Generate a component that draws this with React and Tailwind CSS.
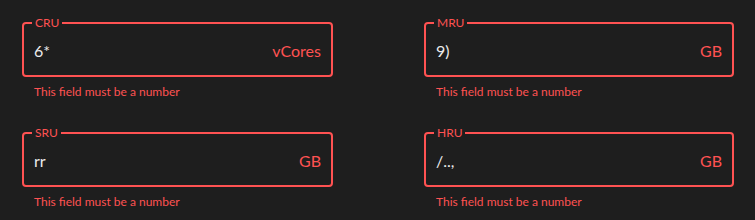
import React from "react";

const fields = [
  { label: "CRU", value: "6*", unit: "vCores" },
  { label: "MRU", value: "9)", unit: "GB" },
  { label: "SRU", value: "rr", unit: "GB" },
  { label: "HRU", value: "/..,", unit: "GB" },
];

function Field({ label, value, unit }) {
  return (
    <div className="flex flex-col">
      <div className="relative h-[55px] rounded-[4px] border-2 border-[#ff5252] flex items-center pl-[10px] pr-[10px] pt-[3px]">
        <span className="absolute -top-[9px] left-[8px] px-[3px] bg-[#1e1e1e] text-[12px] leading-[16px] text-[#ff5252]">
          {label}
        </span>
        <span className="flex-1 text-[16px] text-[#ececec]">{value}</span>
        <span className="text-[16px] text-[#ff5252]">{unit}</span>
      </div>
      <div className="mt-[7px] pl-[12px] text-[12px] leading-[16px] text-[#ff5252]">
        This field must be a number
      </div>
    </div>
  );
}

export default function App() {
  return (
    <div
      className="w-[755px] h-[220px] bg-[#1e1e1e] pt-[22px] px-[22px]"
      style={{ fontFamily: "Lato, 'Open Sans', sans-serif" }}
    >
      <div className="grid grid-cols-[311px_310px] gap-x-[91px] gap-y-[32px]">
        {fields.map((f) => (
          <Field key={f.label} {...f} />
        ))}
      </div>
    </div>
  );
}
